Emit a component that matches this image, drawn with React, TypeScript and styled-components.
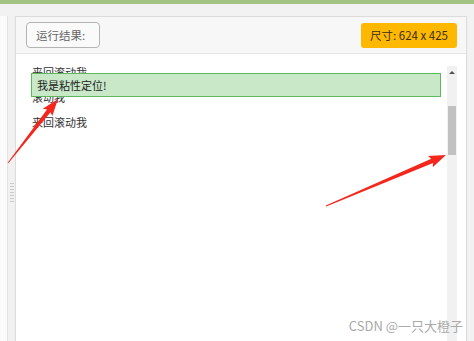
import styled, { createGlobalStyle } from "styled-components";

const GlobalStyle = createGlobalStyle`
  * {
    box-sizing: border-box;
  }
  body {
    margin: 0;
    background-color: #f2f2f2;
    font-family: "Noto Sans CJK SC", "Liberation Sans", sans-serif;
    color: #333;
  }
`;

const Page = styled.div`
  position: relative;
  height: 341px;
  display: flex;
  flex-direction: column;
  overflow: hidden;
`;

const TopBar = styled.div`
  height: 4px;
  background-color: #a2c384;
`;

const Main = styled.div`
  flex: 1;
  display: flex;
  padding-top: 12px;
  min-height: 0;
`;

const LeftPane = styled.div`
  width: 8px;
  background-color: #fbfbfb;
  border-right: 1px solid #e2e2e2;
`;

const Splitter = styled.div`
  width: 7px;
  display: flex;
  justify-content: center;
  padding-top: 167px;
  background-color: #f1f1f1;
`;

const Grip = styled.div`
  width: 4px;
  height: 20px;
  background-image: repeating-linear-gradient(
    to bottom,
    #c9c9c9 0,
    #c9c9c9 1px,
    transparent 1px,
    transparent 3px
  );
`;

const Panel = styled.div`
  flex: 1;
  margin-right: 7px;
  display: flex;
  flex-direction: column;
  background-color: #fff;
  border: 1px solid #dcdcdc;
  border-bottom: none;
`;

const Header = styled.div`
  height: 37px;
  display: flex;
  align-items: center;
  justify-content: space-between;
  padding: 0 9px 0 10px;
  background-color: #f7f7f7;
  border-bottom: 1px solid #e6e6e6;
`;

const ResultButton = styled.div`
  width: 74px;
  height: 26px;
  display: flex;
  align-items: center;
  padding-left: 9px;
  font-size: 11.5px;
  color: #666;
  background-color: #fafafa;
  border: 1px solid #b4b4b4;
  border-radius: 4px;
`;

const SizeBadge = styled.div`
  width: 96px;
  height: 25px;
  display: flex;
  align-items: center;
  justify-content: center;
  font-size: 11.5px;
  color: #3a2f10;
  background-color: #ffb800;
  border-radius: 3px;
`;

const Body = styled.div`
  flex: 1;
  display: flex;
  min-height: 0;
`;

const Content = styled.div`
  position: relative;
  flex: 1;
  padding: 6px 0 0 15px;
  overflow: hidden;
`;

const Line = styled.div`
  height: 25px;
  line-height: 25px;
  padding-left: 1px;
  font-size: 11px;
  color: #333;
`;

const StickyBar = styled.div`
  position: absolute;
  top: 19px;
  left: 15px;
  right: 6px;
  height: 24px;
  display: flex;
  align-items: center;
  padding-left: 5px;
  font-size: 11px;
  color: #222;
  background-color: #c8e8c8;
  border: 1px solid #5db75d;
`;

const ScrollTrack = styled.div`
  width: 10px;
  margin: 12px 9px 0 0;
  display: flex;
  flex-direction: column;
  align-items: center;
  background-color: #f1f1f1;
`;

const ScrollArrow = styled.div`
  margin-top: 5px;
  width: 0;
  height: 0;
  border-left: 3px solid transparent;
  border-right: 3px solid transparent;
  border-bottom: 3px solid #505050;
`;

const ScrollThumb = styled.div`
  margin-top: 32px;
  width: 8px;
  height: 49px;
  background-color: #c1c1c1;
`;

const Watermark = styled.div`
  position: absolute;
  right: 11px;
  bottom: 6px;
  font-size: 13px;
  color: #a9a9a9;
  white-space: nowrap;
`;

const Overlay = styled.svg`
  position: absolute;
  inset: 0;
  pointer-events: none;
`;

function arrowPoints(tx: number, ty: number, px: number, py: number) {
  const len = Math.hypot(px - tx, py - ty);
  const dx = (px - tx) / len;
  const dy = (py - ty) / len;
  const nx = -dy;
  const ny = dx;
  const head = 15;
  const bx = px - dx * head;
  const by = py - dy * head;
  const pts = [
    [tx + nx * 0.4, ty + ny * 0.4],
    [bx + nx * 2.2, by + ny * 2.2],
    [bx - dx * 2 + nx * 6, by - dy * 2 + ny * 6],
    [px, py],
    [bx - dx * 2 - nx * 6, by - dy * 2 - ny * 6],
    [bx - nx * 2.2, by - ny * 2.2],
    [tx - nx * 0.4, ty - ny * 0.4],
  ];
  return pts.map((p) => p[0].toFixed(1) + "," + p[1].toFixed(1)).join(" ");
}

const lines = ["来回滚动我", "滚动我", "来回滚动我"];

export default function App() {
  return (
    <>
      <GlobalStyle />
      <Page>
        <TopBar />
        <Main>
          <LeftPane />
          <Splitter>
            <Grip />
          </Splitter>
          <Panel>
            <Header>
              <ResultButton>运行结果:</ResultButton>
              <SizeBadge>尺寸: 624 x 425</SizeBadge>
            </Header>
            <Body>
              <Content>
                {lines.map((text, i) => (
                  <Line key={i}>{text}</Line>
                ))}
                <StickyBar>我是粘性定位!</StickyBar>
              </Content>
              <ScrollTrack>
                <ScrollArrow />
                <ScrollThumb />
              </ScrollTrack>
            </Body>
          </Panel>
        </Main>
        <Watermark>CSDN @一只大橙子</Watermark>
        <Overlay width="474" height="341" viewBox="0 0 474 341">
          <polygon points={arrowPoints(8, 163, 58, 99)} fill="#f5261b" />
          <polygon points={arrowPoints(326, 206, 446, 155)} fill="#f5261b" />
        </Overlay>
      </Page>
    </>
  );
}
